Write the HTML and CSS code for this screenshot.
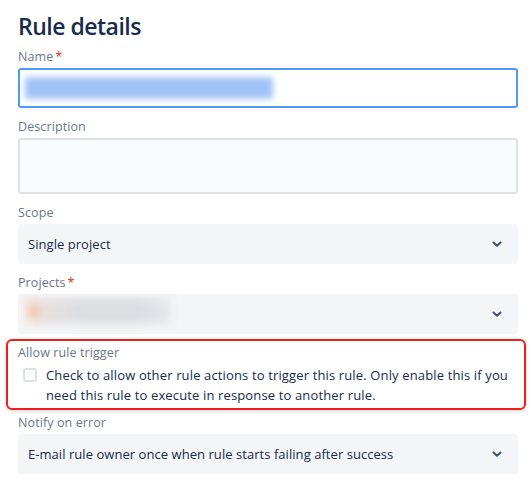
FILE: index.html
```html
<!DOCTYPE html>
<html lang="en">
<head>
<meta charset="utf-8">
<title>Rule details</title>
<link rel="stylesheet" href="styles.css">
</head>
<body>
<main class="page">
  <h1 class="title">Rule details</h1>

  <div class="field">
    <label class="label">Name<span class="req">*</span></label>
    <div class="input input-focus">
      <div class="blur blur-name"></div>
    </div>
  </div>

  <div class="field">
    <label class="label">Description</label>
    <div class="textarea"></div>
  </div>

  <div class="field">
    <label class="label">Scope</label>
    <div class="select">
      <span class="select-value">Single project</span>
      <svg class="chev" width="10" height="8" viewBox="0 0 10 8"><path d="M1.5 2.5 L5 5.8 L8.5 2.5" fill="none" stroke="#42526e" stroke-width="2" stroke-linecap="round" stroke-linejoin="round"/></svg>
    </div>
  </div>

  <div class="field">
    <label class="label">Projects<span class="req">*</span></label>
    <div class="select">
      <div class="blur blur-project"><span class="blur-dot"></span></div>
      <svg class="chev" width="10" height="8" viewBox="0 0 10 8"><path d="M1.5 2.5 L5 5.8 L8.5 2.5" fill="none" stroke="#42526e" stroke-width="2" stroke-linecap="round" stroke-linejoin="round"/></svg>
    </div>
  </div>

  <div class="highlight">
    <label class="label">Allow rule trigger</label>
    <div class="check-row">
      <span class="checkbox"></span>
      <p class="check-text">Check to allow other rule actions to trigger this rule. Only enable this if you need this rule to execute in response to another rule.</p>
    </div>
  </div>

  <div class="field field-after">
    <label class="label">Notify on error</label>
    <div class="select">
      <span class="select-value">E-mail rule owner once when rule starts failing after success</span>
      <svg class="chev" width="10" height="8" viewBox="0 0 10 8"><path d="M1.5 2.5 L5 5.8 L8.5 2.5" fill="none" stroke="#42526e" stroke-width="2" stroke-linecap="round" stroke-linejoin="round"/></svg>
    </div>
  </div>
</main>
</body>
</html>
```
FILE: styles.css
```css
* { box-sizing: border-box; }
body {
  margin: 0;
  background: #fff;
  font-family: "Open Sans", "Noto Sans", sans-serif;
  color: #172b4d;
}
.page {
  width: 500px;
  margin-left: 18px;
  display: flex;
  flex-direction: column;
}
.title {
  margin: 10px 0 0;
  font-size: 23px;
  line-height: 32px;
  font-weight: 600;
  letter-spacing: -0.5px;
  color: #172b4d;
}
.field { display: flex; flex-direction: column; margin-top: 7px; }
.field + .field { margin-top: 11px; }
.field-after { margin-top: 5px !important; }
.label {
  display: block;
  font-size: 12.5px;
  line-height: 16px;
  font-weight: 500;
  letter-spacing: 0.1px;
  color: #6b778c;
  margin-bottom: 3px;
}
.req { color: #de350b; margin-left: 2px; }
.input {
  height: 40px;
  border: 2px solid #4c9aff;
  border-radius: 3px;
  background: #fff;
  position: relative;
  overflow: hidden;
}
.textarea {
  height: 56px;
  border: 2px solid #dfe1e6;
  border-radius: 3px;
  background: #fafbfc;
}
.select {
  height: 40px;
  background: #f4f5f7;
  border-radius: 3px;
  display: flex;
  align-items: center;
  padding: 0 16px 0 10px;
  position: relative;
  overflow: hidden;
}
.select-value {
  flex: 1;
  font-size: 13px;
  letter-spacing: 0.05px;
  color: #172b4d;
}
.chev { margin-left: auto; flex: none; }
.blur { position: absolute; filter: blur(3px); }
.blur-name {
  left: 5px; top: 7px;
  width: 248px; height: 22px;
  background: #a2c3f8;
}
.blur-project {
  left: 7px; top: 4px;
  width: 146px; height: 26px;
  background: linear-gradient(90deg, #f4e3dc 0%, #e6e0de 15%, #dcdee2 40%, #dcdee3 80%, #e6e8ec 100%);
  filter: blur(4px);
}
.blur-dot {
  position: absolute;
  left: 2px; top: 5px;
  width: 14px; height: 16px;
  border-radius: 50%;
  background: #f3c9b5;
}
.highlight {
  margin: 5px -8px 0 -12px;
  padding: 4px 6px 3px 10px;
  border: 2px solid #ee1c1c;
  border-radius: 6px;
  box-shadow: 0 1px 4px rgba(0,0,0,0.18);
}
.check-row { display: flex; align-items: flex-start; margin-top: 4px; }
.checkbox {
  flex: none;
  width: 14px; height: 14px;
  margin: 3px 9px 0 5px;
  border: 2px solid #dfe1e6;
  border-radius: 3px;
  background: #fafbfc;
}
.check-text {
  margin: 0;
  font-size: 13px;
  line-height: 20px;
  letter-spacing: 0.14px;
  color: #172b4d;
}
```
